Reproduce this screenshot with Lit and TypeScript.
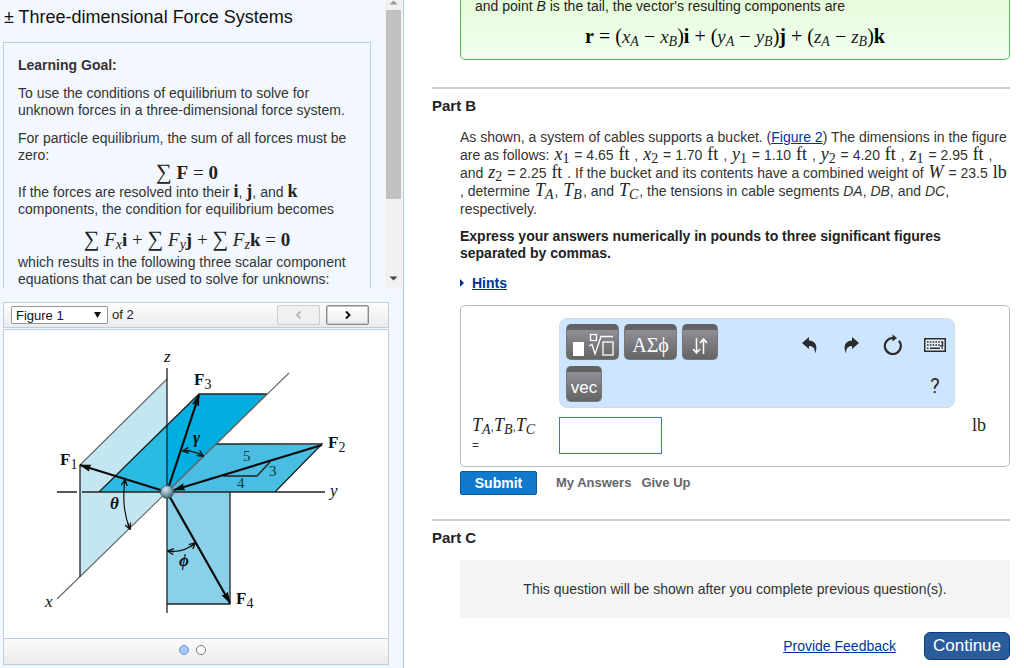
import { LitElement, html, css, svg } from "lit";
import { customElement, state } from "lit/decorators.js";

const sub = (name: string, index: string) =>
  html`<span class="m"><i>${name}</i><sub>${index}</sub></span>`;

const base = css`
  * { box-sizing: border-box; }
  p, h1, h2 { margin: 0; }
  a { color: #003399; text-decoration: underline; }
  button, input, select { font: inherit; }
  svg { display: block; }
  .m {
    font-family: "Liberation Serif", serif;
    font-size: 18px;
    line-height: 17px;
    color: #222;
    white-space: nowrap;
  }
  .m i { font-style: italic; }
  .m sub {
    font-size: 14px;
    line-height: 0;
    vertical-align: -3px;
    font-style: italic;
  }
  .m .n { font-style: normal; }
`;

@customElement("force-diagram")
export class ForceDiagram extends LitElement {
  static styles = css`
    :host { display: block; }
    svg { display: block; width: 100%; height: auto; }
    text { font-family: "Liberation Serif", serif; font-size: 17px; fill: #111; }
    .bold { font-weight: bold; }
    .it { font-style: italic; }
    .bi { font-weight: bold; font-style: italic; }
    .idx { font-weight: normal; font-size: 14px; }
    .num { font-size: 15px; fill: #0c3a4a; }
    .line { stroke: #222; stroke-width: 1.3; fill: none; }
    .thin { stroke: #666; stroke-width: 1.1; fill: none; }
    .force { stroke: #0a0a0a; stroke-width: 2.2; fill: none; }
    .arc { stroke: #111; stroke-width: 1.2; fill: none; }
  `;

  private force(x: number, y: number, i: string) {
    return svg`<text class="bold" x=${x} y=${y}>F<tspan class="idx" dy="4">${i}</tspan></text>`;
  }

  render() {
    return html`<svg viewBox="4 330 384 308" role="img" aria-label="Forces F1 to F4 acting on a particle">
      <defs>
        <marker id="head" viewBox="0 0 12 8" refX="11" refY="4" markerWidth="12" markerHeight="8"
          markerUnits="userSpaceOnUse" orient="auto-start-reverse">
          <path d="M12 4L0 0.3 1.5 4 0 7.7Z" fill="#0a0a0a" />
        </marker>
        <marker id="tick" viewBox="0 0 8 8" refX="7" refY="4" markerWidth="7" markerHeight="7"
          markerUnits="userSpaceOnUse" orient="auto-start-reverse">
          <path d="M0.5 0.5L7.5 4 0.5 7.5M7.5 4H0" fill="none" stroke="#111" stroke-width="1.5" />
        </marker>
        <radialGradient id="ball" cx="0.4" cy="0.3" r="0.75">
          <stop offset="0" stop-color="#d4e6ed" />
          <stop offset="0.5" stop-color="#87a9b6" />
          <stop offset="1" stop-color="#38525d" />
        </radialGradient>
      </defs>
      <polygon points="167,379 80,465 80,577 167,492" fill="#c4e6f0" />
      <polygon points="216,444 322,445 275,492 167,492" fill="#4abde2" />
      <polygon points="199,394 267,394 167,492 99,492" fill="#00aee0" />
      <polygon points="167,424 167,492 99,492" fill="#2abbe2" />
      <rect x="167" y="492" width="63" height="112" fill="#8bd0e9" />
      <path class="thin" d="M167 379L80 465M289 373L57 599" />
      <path class="line" d="M80 465V577M57 492H77M82 492H325M167 368V613M230 492V604H167" />
      <path class="line" d="M99 492L199 394H267M216 444H322L275 492" stroke-width="1" />
      <path class="thin" d="M267 394L167 492" />
      <path class="line" d="M223 476H257L270 462" />
      <path class="force" d="M167 492L80 465" marker-end="url(#head)" />
      <path class="force" d="M322 445L174 490" marker-end="url(#head)" />
      <path class="force" d="M167 492L199 395" marker-end="url(#head)" />
      <path class="force" d="M167 492L230 603" marker-end="url(#head)" />
      <path class="arc" d="M183 451Q193 450 203 456" marker-start="url(#tick)" marker-end="url(#tick)" />
      <path class="arc" d="M125 480Q121 508 130 529" marker-start="url(#tick)" marker-end="url(#tick)" />
      <path class="arc" d="M168 551Q184 553 195 543" marker-start="url(#tick)" marker-end="url(#tick)" />
      <circle cx="167" cy="492" r="6.5" fill="url(#ball)" stroke="#38525d" stroke-width="0.8" />
      ${this.force(60, 465, "1")} ${this.force(328, 448, "2")}
      ${this.force(194, 385, "3")} ${this.force(236, 604, "4")}
      <text class="it" x="164" y="362">z</text>
      <text class="it" x="330" y="496">y</text>
      <text class="it" x="45" y="607">x</text>
      <text class="num" x="243" y="461">5</text>
      <text class="num" x="269" y="476">3</text>
      <text class="num" x="237" y="488">4</text>
      <text class="bi" x="193" y="443">γ</text>
      <text class="bi" x="110" y="509">θ</text>
      <text class="bi" x="179" y="566">ϕ</text>
    </svg>`;
  }
}

@customElement("figure-viewer")
export class FigureViewer extends LitElement {
  static styles = [base, css`
    :host { display: block; color: #222; font-size: 13px; }
    .bar {
      display: flex;
      align-items: center;
      height: 26px;
      padding: 0 19px 0 7px;
      gap: 4px;
      border: 1px solid #b9cee2;
      background: linear-gradient(#fdfdfd, #ebebeb);
    }
    .pick { position: relative; width: 97px; height: 18px; }
    .pick select {
      appearance: none;
      display: block;
      width: 100%;
      height: 100%;
      padding: 0 4px;
      border: 1px solid #999;
      border-radius: 1px;
      background: #fff;
      color: #111;
    }
    .pick svg { position: absolute; right: 7px; top: 6px; pointer-events: none; }
    .nav { display: flex; gap: 6px; margin-left: auto; }
    .nav button {
      display: grid;
      place-items: center;
      width: 43px;
      height: 20px;
      padding: 0;
      border: 1px solid #8a8a8a;
      border-radius: 2px;
      background: linear-gradient(#fff, #ececec);
      color: #111;
      box-shadow: 0 0 0 1px #c8c8c8 inset;
    }
    .nav button:disabled { border-color: #ccc; color: #bbb; background: #f0f0f0; box-shadow: none; }
    .canvas { margin-top: 1px; border: 1px solid #b9cee2; background: #fff; }
    .dots {
      display: flex;
      justify-content: center;
      align-items: center;
      gap: 7px;
      height: 26px;
      padding: 0 7px 3px 0;
      border: 1px solid #b9cee2;
      border-top: 0;
      background: linear-gradient(#fbfbfb, #ebebeb);
    }
    .dots input {
      appearance: none;
      width: 10px;
      height: 10px;
      margin: 0;
      border: 1px solid #777;
      border-radius: 50%;
      background: #fff;
    }
    .dots input:checked { background: #a3c8fb; border-color: #7396cf; }
  `];

  @state() private current = 1;

  render() {
    return html`
      <div class="bar">
        <div class="pick">
          <select aria-label="Figure" @change=${(e: Event) => (this.current = (e.target as HTMLSelectElement).selectedIndex + 1)}>
            ${[1, 2].map((n) => html`<option ?selected=${n === this.current}>Figure ${n}</option>`)}
          </select>
          <svg width="7" height="6" viewBox="0 0 7 6"><path d="M0 0H7L3.5 6Z" fill="#111" /></svg>
        </div>
        <span>of 2</span>
        <div class="nav">
          <button aria-label="Previous figure" ?disabled=${this.current === 1} @click=${() => (this.current = 1)}>
            <svg width="8" height="8" viewBox="0 0 8 8"><path d="M5.500 0.500L2 4 5.500 7.500" fill="none" stroke="currentColor" stroke-width="2" /></svg>
          </button>
          <button aria-label="Next figure" @click=${() => (this.current = 2)}>
            <svg width="8" height="8" viewBox="0 0 8 8"><path d="M2 0.500L5.500 4 2 7.500" fill="none" stroke="currentColor" stroke-width="2" /></svg>
          </button>
        </div>
      </div>
      <div class="canvas"><force-diagram></force-diagram></div>
      <div class="dots">
        ${[1, 2].map((n) => html`<input type="radio" name="fig" aria-label="Show figure ${n}"
          .checked=${n === this.current} @change=${() => (this.current = n)} />`)}
      </div>`;
  }
}

@customElement("answer-entry")
export class AnswerEntry extends LitElement {
  static styles = [base, css`
    :host { display: block; }
    .box {
      display: grid;
      grid-template-columns: 87px 1fr 43px;
      row-gap: 9px;
      padding: 12px 11px;
      border: 1px solid #bbb;
      border-radius: 5px;
      background: #fff;
    }
    .tools {
      grid-column: 2;
      display: flex;
      justify-content: space-between;
      height: 90px;
      padding: 5px 8px 5px 6px;
      border: 1px solid #d3dbe4;
      border-radius: 8px;
      background: #cde5ff;
    }
    .keys { display: flex; flex-wrap: wrap; align-content: space-between; gap: 5px; width: 160px; }
    .keys button {
      display: flex;
      align-items: center;
      justify-content: center;
      width: 53px;
      height: 36px;
      padding: 0;
      border: 1px solid #777;
      border-top: 6px solid #636363;
      border-radius: 5px;
      background: linear-gradient(#908e97, #646464);
      color: #fff;
      font: 20px/22px "Liberation Serif", serif;
    }
    .keys .small { width: 36px; padding-top: 3px; }
    .keys .word { font: 17px/20px "Liberation Sans", sans-serif; }
    .acts {
      display: grid;
      grid-template-columns: repeat(4, 42px);
      grid-template-rows: 41px 41px;
      justify-items: center;
      align-items: center;
      margin-right: -10px;
    }
    .acts button {
      display: grid;
      place-items: center;
      padding: 0;
      border: 0;
      background: none;
      color: #2b2b2b;
      font: 20px/22px Roboto, sans-serif;
    }
    .acts .help { grid-column: 4; }
    label { grid-column: 1; line-height: 18px; color: #333; font-size: 12px; white-space: nowrap; }
    .field {
      display: block;
      width: 103px;
      height: 37px;
      padding: 0 6px;
      border: 1px solid #3f73d3;
      background: #fff;
    }
    .unit { justify-self: end; margin-right: 12px; }
  `];

  render() {
    return html`<div class="box">
      <div class="tools">
        <div class="keys">
          <button aria-label="Templates">
            <svg width="42" height="26" viewBox="0 0 42 26" fill="none" stroke="#fff" stroke-width="1.3">
              <rect x="1" y="10" width="11" height="14" fill="#fff" stroke="none" />
              <rect x="18.500" y="2.500" width="6" height="6" />
              <path d="M17 14L20 12.500 23 22 29 4.500H41" />
              <rect x="31" y="10" width="10" height="13" />
            </svg>
          </button>
          <button aria-label="Symbols">ΑΣϕ</button>
          <button class="small" aria-label="Arrows">
            <svg width="16" height="18" viewBox="0 0 16 18" fill="none" stroke="#fff" stroke-width="1.5">
              <path d="M4.500 1V16M1 12L4.500 16 8 12M11.500 17V2M8 6L11.500 2 15 6" />
            </svg>
          </button>
          <button class="small word">vec</button>
        </div>
        <div class="acts">
          <button aria-label="Undo">
            <svg width="17" height="18" viewBox="0 0 17 18"><path d="M1 7L8 1V4.500C14 4.500 17.500 10 14 17.500 14 12 12 10 8 10V13Z" fill="currentColor" /></svg>
          </button>
          <button aria-label="Redo">
            <svg width="17" height="18" viewBox="0 0 17 18"><path d="M16 7L9 1V4.500C3 4.500 -0.500 10 3 17.500 3 12 5 10 9 10V13Z" fill="currentColor" /></svg>
          </button>
          <button aria-label="Reset">
            <svg width="20" height="21" viewBox="0 0 20 21"><path d="M15.900 6.800A8 8 0 1 1 10 4" fill="none" stroke="currentColor" stroke-width="2.200" /><path d="M9.500 0.500L14 4 9.500 7.500Z" fill="currentColor" /></svg>
          </button>
          <button aria-label="Keyboard shortcuts">
            <svg width="22" height="14" viewBox="0 0 22 14"><rect x="0.750" y="0.750" width="20.500" height="12.500" fill="#e4f0fc" stroke="currentColor" stroke-width="1.500" />
              <path d="M3 4H19M3 7H17" stroke="currentColor" stroke-width="1.600" stroke-dasharray="1.600 1.200" /><path d="M18.500 3.500V8H16M6 10.300H16M3 10.300H4.500M17.500 10.300H19" fill="none" stroke="currentColor" stroke-width="1.500" /></svg>
          </button>
          <button class="help" aria-label="Help">?</button>
        </div>
      </div>
      <label for="answer">${sub("T", "A")},${sub("T", "B")},${sub("T", "C")}<br />=</label>
      <input id="answer" class="field" type="text" autocomplete="off" />
      <span class="unit m">lb</span>
    </div>`;
  }
}

@customElement("app-root")
export class AppRoot extends LitElement {
  static styles = [base, css`
    :host {
      display: grid;
      grid-template-columns: 404px 1fr;
      height: 100vh;
      overflow: hidden;
      background: #fff;
      color: #333;
      font: 14px/18px "Liberation Sans", Arial, sans-serif;
    }
    .side {
      display: flex;
      flex-direction: column;
      min-height: 0;
      border-right: 1px solid #b3c6da;
      background: #f3f8ff;
    }
    .scroller { display: flex; flex: 1; min-height: 0; overflow: hidden; }
    .intro { flex: 1; padding: 6px 14px 0 3px; }
    h1 { font-size: 18px; line-height: 22px; font-weight: normal; color: #111; padding-left: 1px; }
    .goal {
      margin-top: 14px;
      padding: 14px 14px 40px;
      border: 1px solid #b9cee2;
      line-height: 17px;
    }
    .goal p + p { margin-top: 11px; }
    .eq {
      margin-bottom: 2px;
      text-align: center;
      font-family: "Liberation Serif", serif;
      font-size: 19px;
      color: #222;
    }
    .eq .m { font-size: 19px; }
    .sum { font-size: 22px; line-height: 0; }
    .wide { margin: 12px 0 4px; line-height: 20px; }
    .rail {
      display: flex;
      flex-direction: column;
      align-items: center;
      justify-content: space-between;
      width: 17px;
      margin-right: 1px;
      padding-bottom: 7px;
      background: #f1f1f1;
    }
    .thumb { width: 15px; height: 189px; margin-bottom: auto; margin-top: 5px; background: #c1c1c1; }
    .viewer { padding: 14px 14px 3px 3px; }
    .main {
      display: flex;
      flex-direction: column;
      justify-content: flex-end;
      min-width: 0;
      min-height: 0;
      overflow: hidden;
      padding: 0 14px 8px 28px;
    }
    .inset { margin-left: 28px; }
    .hint {
      padding: 24px 14px 12px;
      border: 1px solid #5cb85a;
      border-radius: 5px;
      background: linear-gradient(#e0fad0, #f2fff0);
      color: #222;
    }
    .hint .eq { margin: 10px 0 0; line-height: 22px; color: #000; font-size: 20px; }
    .part { padding-top: 8px; border-top: 2px solid #ccc; }
    h2 { font-size: 15px; line-height: 18px; color: #222; }
    .b { margin-top: 27px; }
    .c { margin-top: 24px; }
    .body { margin-top: 13px; }
    .text .m { padding: 0 1px; }
    .strong { margin-top: 10px; line-height: 17px; font-weight: bold; color: #222; }
    .hints { display: flex; align-items: center; gap: 8px; margin: 12px 0 13px; font-weight: bold; }
    .row { display: flex; align-items: center; margin-top: 4px; font-size: 13px; font-weight: bold; }
    .row a { color: #666; text-decoration: none; }
    .submit {
      width: 77px;
      height: 24px;
      margin-right: 19px;
      padding: 0;
      border: 1px solid #0b5c9e;
      border-radius: 2px;
      background: #1079cc;
      color: #fff;
      font-size: 14px;
      font-weight: bold;
    }
    .give { margin-left: 10px; }
    .later { padding: 20px; background: #f5f5f5; text-align: center; }
    .foot { display: flex; align-items: center; justify-content: flex-end; gap: 28px; margin-top: 14px; }
    .go {
      width: 86px;
      height: 28px;
      padding: 0;
      border: 1px solid #0c3d7c;
      border-radius: 6px;
      background: #2a5c9b;
      color: #fff;
      font-size: 17px;
    }
  `];

  render() {
    const S = html`<span class="sum">∑</span>`;
    const d = (v: string, i: string, n: string) =>
      html`<span class="m"><i>${v}</i><sub class="n">${i}</sub></span> = ${n} <span class="m">ft</span>`;
    return html`
      <aside class="side">
        <div class="scroller">
          <div class="intro">
            <h1>± Three-dimensional Force Systems</h1>
            <section class="goal">
              <p><b>Learning Goal:</b></p>
              <p>To use the conditions of equilibrium to solve for unknown forces in a three-dimensional force system.</p>
              <p>For particle equilibrium, the sum of all forces must be zero:</p>
              <div class="eq">${S} <b>F</b> = <b>0</b></div>
              <p>If the forces are resolved into their <b class="m">i</b>, <b class="m">j</b>, and <b class="m">k</b> components, the condition for equilibrium becomes</p>
              <div class="eq wide">${S} ${sub("F", "x")}<b>i</b> + ${S} ${sub("F", "y")}<b>j</b> + ${S} ${sub("F", "z")}<b>k</b> = <b>0</b></div>
              <p>which results in the following three scalar component equations that can be used to solve for unknowns:</p>
            </section>
          </div>
          <div class="rail" aria-hidden="true">
            <svg width="9" height="5" viewBox="0 0 9 5"><path d="M0.500 4.500L4.500 0.500 8.500 4.500Z" fill="#999" /></svg>
            <div class="thumb"></div>
            <svg width="9" height="5" viewBox="0 0 9 5"><path d="M0.500 0.500L4.500 4.500 8.500 0.500Z" fill="#444" /></svg>
          </div>
        </div>
        <div class="viewer"><figure-viewer></figure-viewer></div>
      </aside>
      <main class="main">
        <div class="hint inset">
          <p>and point <i>B</i> is the tail, the vector's resulting components are</p>
          <div class="eq"><b>r</b> = (${sub("x", "A")} − ${sub("x", "B")})<b>i</b> + (${sub("y", "A")} − ${sub("y", "B")})<b>j</b> + (${sub("z", "A")} − ${sub("z", "B")})<b>k</b></div>
        </div>
        <section class="part b">
          <h2>Part B</h2>
          <div class="inset">
            <p class="body text">As shown, a system of cables supports a bucket. (<a href="#figure-2">Figure 2</a>) The dimensions in the figure are as follows: ${d("x", "1", "4.65")} , ${d("x", "2", "1.70")} , ${d("y", "1", "1.10")} , ${d("y", "2", "4.20")} , ${d("z", "1", "2.95")} , and ${d("z", "2", "2.25")} . If the bucket and its contents have a combined weight of <i class="m">W</i> = 23.5 <span class="m">lb</span> , determine ${sub("T", "A")}, ${sub("T", "B")}, and ${sub("T", "C")}, the tensions in cable segments <i>DA</i>, <i>DB</i>, and <i>DC</i>, respectively.</p>
            <p class="strong">Express your answers numerically in pounds to three significant figures separated by commas.</p>
            <div class="hints">
              <svg width="4" height="8" viewBox="0 0 4 8"><path d="M0 0L4 4 0 8Z" fill="#003399" /></svg>
              <a href="#hints">Hints</a>
            </div>
            <answer-entry></answer-entry>
            <div class="row">
              <button class="submit">Submit</button>
              <a href="#answers">My Answers</a>
              <a class="give" href="#give-up">Give Up</a>
            </div>
          </div>
        </section>
        <section class="part c">
          <h2>Part C</h2>
          <div class="inset body later">This question will be shown after you complete previous question(s).</div>
        </section>
        <div class="foot">
          <a href="#feedback">Provide Feedback</a>
          <button class="go">Continue</button>
        </div>
      </main>`;
  }
}
